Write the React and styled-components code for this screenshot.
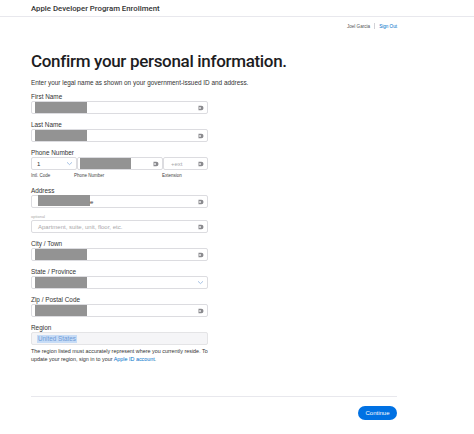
import React from 'react';
import styled, { createGlobalStyle } from 'styled-components';

const GlobalStyle = createGlobalStyle`
  body {
    margin: 0;
    background: #fff;
    font-family: "Liberation Sans", Arial, sans-serif;
    color: #1d1d1f;
  }
`;

const Header = styled.header`
  height: 16px;
  border-bottom: 1px solid #e8e8ed;
  padding-left: 31px;
  display: flex;
  align-items: center;
`;

const HeaderTitle = styled.div`
  font-family: Roboto, "Liberation Sans", sans-serif;
  font-size: 7.8px;
  font-weight: 500;
  color: #333;
`;

const Page = styled.main`
  margin-left: 31px;
  width: 366px;
`;

const UserBar = styled.div`
  display: flex;
  justify-content: flex-end;
  align-items: center;
  gap: 4px;
  height: 18px;
  font-size: 4.6px;
  color: #555;
`;

const Sep = styled.span`
  width: 1px;
  height: 6px;
  background: #d2d2d7;
`;

const Link = styled.a`
  color: #0070c9;
  text-decoration: none;
`;

const Title = styled.h1`
  margin: 16px 0 0;
  font-family: Roboto, "Liberation Sans", sans-serif;
  font-size: 17px;
  font-weight: 500;
  letter-spacing: -0.32px;
  line-height: 20px;
  color: #1d1d1f;
`;

const Intro = styled.p`
  margin: 8px 0 0;
  font-size: 6.4px;
  line-height: 7px;
  color: #333;
`;

const Form = styled.div`
  width: 177px;
  display: flex;
  flex-direction: column;
`;

const Field = styled.div`
  display: flex;
  flex-direction: column;
`;

const Label = styled.label`
  font-size: 6.4px;
  color: #333;
  line-height: 9px;
  height: 9px;
  margin-top: 6px;
`;

const Optional = styled.label`
  font-size: 4px;
  color: #aaa;
  line-height: 6px;
  margin-top: 6px;
`;

const Box = styled.div`
  height: 13px;
  box-sizing: border-box;
  border: 1px solid ${(p) => (p.$disabled ? '#e4e4e6' : '#dcdce0')};
  border-radius: 2px;
  background: ${(p) => (p.$disabled ? '#f5f5f7' : '#fff')};
  display: flex;
  align-items: center;
  padding: 0 3px 0 ${(p) => p.$pl || 3}px;
  font-size: 6px;
  color: #333;
  flex: ${(p) => p.$flex || 'none'};
  width: ${(p) => (p.$w ? p.$w + 'px' : 'auto')};
`;

const Redact = styled.span`
  display: block;
  background: #939393;
  height: 11px;
  width: ${(p) => p.$w}px;
  margin-top: ${(p) => p.$mt || 0}px;
`;

const Placeholder = styled.span`
  color: #a8a8ab;
  font-size: 6px;
`;

const Trail = styled.span`
  margin-left: auto;
  display: flex;
  align-items: center;
`;

const Selected = styled.span`
  background: #c7dcf6;
  color: #6f9bd6;
  font-size: 6.3px;
  padding: 0 1px;
  line-height: 8px;
`;

const PhoneRow = styled.div`
  display: flex;
`;

const SubLabels = styled.div`
  display: flex;
  font-size: 4.5px;
  color: #444;
  height: 10px;
  align-items: center;
`;

const SubLabel = styled.span`
  width: ${(p) => p.$w}px;
`;

const Note = styled.div`
  margin-top: 2px;
  font-size: 5.4px;
  line-height: 8px;
  color: #333;
`;

const NoteLine = styled.div`
  white-space: nowrap;
`;

const Footer = styled.div`
  margin-top: 33px;
  border-top: 1px solid #e8e8ed;
  display: flex;
  justify-content: flex-end;
  padding-top: 9px;
`;

const Button = styled.button`
  border: none;
  background: #0071e3;
  color: #fff;
  border-radius: 7px;
  height: 14px;
  width: 39px;
  padding: 0;
  font-family: inherit;
  font-size: 6px;
  cursor: pointer;
`;

const KeyIcon = () => (
  <svg width="6" height="6" viewBox="0 0 6 6">
    <path d="M0.5 0.8h2.8a2.2 2.2 0 0 1 0 4.4H0.5z" fill="#8a8a8e" />
    <rect x="1.3" y="2.2" width="1.5" height="1.6" fill="#fff" />
  </svg>
);

const Chevron = () => (
  <svg width="7" height="5" viewBox="0 0 7 5">
    <path d="M1 1.3l2.5 2.3 2.5-2.3" fill="none" stroke="#8fb2dd" strokeWidth="0.8" />
  </svg>
);

const TextField = ({ label, redact, trail = <KeyIcon /> }) => (
  <Field>
    <Label>{label}</Label>
    <Box>
      <Redact $w={redact} />
      <Trail>{trail}</Trail>
    </Box>
  </Field>
);

export default function App() {
  return (
    <>
      <GlobalStyle />
      <Header>
        <HeaderTitle>Apple Developer Program Enrollment</HeaderTitle>
      </Header>
      <Page>
        <UserBar>
          <span>Joel Garcia</span>
          <Sep />
          <Link href="#">Sign Out</Link>
        </UserBar>
        <Title>Confirm your personal information.</Title>
        <Intro>Enter your legal name as shown on your government-issued ID and address.</Intro>
        <Form>
          <TextField label="First Name" redact={52} />
          <TextField label="Last Name" redact={52} />

          <Field>
            <Label>Phone Number</Label>
            <PhoneRow>
              <Box $w={46} $pl={5}>
                1
                <Trail>
                  <Chevron />
                </Trail>
              </Box>
              <Box $flex="1" $pl={2}>
                <Redact $w={51} />
                <Trail>
                  <KeyIcon />
                </Trail>
              </Box>
              <Box $w={45} $pl={7}>
                <Placeholder>+ext</Placeholder>
                <Trail>
                  <KeyIcon />
                </Trail>
              </Box>
            </PhoneRow>
            <SubLabels>
              <SubLabel $w={43}>Intl. Code</SubLabel>
              <SubLabel $w={88}>Phone Number</SubLabel>
              <SubLabel $w={40}>Extension</SubLabel>
            </SubLabels>
          </Field>

          <Field>
            <Label>Address</Label>
            <Box $pl={6}>
              <Redact $w={52} $mt={-2} />
              <span>e</span>
              <Trail>
                <KeyIcon />
              </Trail>
            </Box>
          </Field>
          <Field>
            <Optional>optional</Optional>
            <Box $pl={6}>
              <Placeholder>Apartment, suite, unit, floor, etc.</Placeholder>
              <Trail>
                <KeyIcon />
              </Trail>
            </Box>
          </Field>

          <TextField label="City / Town" redact={52} />
          <TextField label="State / Province" redact={52} trail={<Chevron />} />
          <TextField label="Zip / Postal Code" redact={52} />

          <Field>
            <Label>Region</Label>
            <Box $disabled $pl={5}>
              <Selected>United States</Selected>
            </Box>
          </Field>
        </Form>
        <Note>
          <NoteLine>The region listed must accurately represent where you currently reside. To</NoteLine>
          <NoteLine>
            <span>update your region, sign in to your </span>
            <Link href="#">Apple ID account</Link>
            <span>.</span>
          </NoteLine>
        </Note>
        <Footer>
          <Button>Continue</Button>
        </Footer>
      </Page>
    </>
  );
}
